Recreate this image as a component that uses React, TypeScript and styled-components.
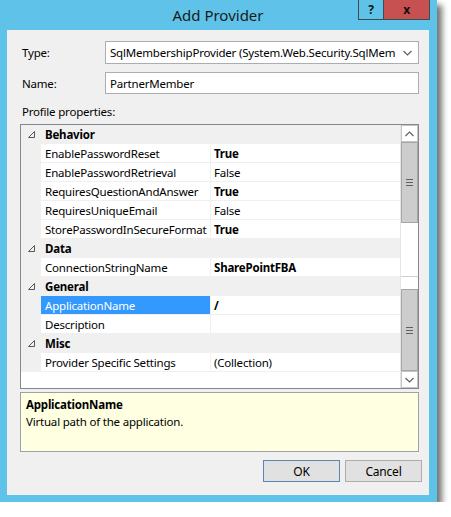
import styled, { createGlobalStyle } from 'styled-components';

const GlobalStyle = createGlobalStyle`
  html, body {
    margin: 0;
    background: #ffffff;
  }
  body {
    font-family: 'Noto Sans', 'Open Sans', sans-serif;
    font-size: 11.5px;
    letter-spacing: -0.2px;
    color: #000;
  }
`;

const Frame = styled.div`
  width: 437px;
  height: 502px;
  box-sizing: border-box;
  padding: 0 8px 7px 7px;
  background: #5fc3e9;
  box-shadow: 5px 5px 6px rgba(0, 0, 0, 0.55);
  display: flex;
  flex-direction: column;
`;

const TitleBar = styled.div`
  height: 30px;
  flex: none;
  display: grid;
  grid-template-columns: 1fr auto 1fr;
  align-items: start;
`;

const Title = styled.div`
  grid-column: 2;
  line-height: 30px;
  font-size: 15px;
  letter-spacing: 0;
  color: #1a1a1a;
`;

const CaptionButtons = styled.div`
  grid-column: 3;
  justify-self: end;
  display: flex;
  margin-right: -1px;
`;

const CaptionButton = styled.div<{ $close?: boolean }>`
  width: ${p => (p.$close ? '46px' : '26px')};
  height: 20px;
  box-sizing: border-box;
  border: 1px solid #3d4b52;
  border-top: none;
  border-left-width: ${p => (p.$close ? '0' : '1px')};
  background: ${p => (p.$close ? '#c75050' : '#5fc3e9')};
  display: flex;
  align-items: center;
  justify-content: center;
  font-weight: bold;
  font-size: 12px;
  color: #111;
`;

const Client = styled.div`
  flex: 1;
  background: #f0f0f0;
  padding: 11px 7px 0 13px;
  display: flex;
  flex-direction: column;
`;

const Form = styled.div`
  width: 399px;
  display: grid;
  grid-template-columns: 85px minmax(0, 1fr);
  row-gap: 8px;
  align-items: center;
`;

const FieldLabel = styled.div`
  padding-left: 2px;
`;

const Field = styled.div<{ $tall?: boolean }>`
  height: ${p => (p.$tall ? '23px' : '22px')};
  min-width: 0;
  box-sizing: border-box;
  border: 1px solid #abadb3;
  background: #fff;
  display: flex;
  align-items: center;
  padding: 0 6px 0 4px;
  gap: 6px;
`;

const FieldText = styled.span`
  flex: 1;
  min-width: 0;
  white-space: nowrap;
  overflow: hidden;
`;

const SectionLabel = styled.div`
  margin: 9px 0 3px 2px;
  height: 18px;
  line-height: 18px;
`;

const Grid = styled.div`
  width: 399px;
  height: 265px;
  flex: none;
  box-sizing: border-box;
  border: 1px solid #828790;
  background: #fff;
  display: flex;
`;

const Rows = styled.div`
  flex: 1;
  display: flex;
  flex-direction: column;
`;

const Row = styled.div<{ $category?: boolean }>`
  height: 19px;
  display: grid;
  grid-template-columns: 20px 169px minmax(0, 1fr);
  background: ${p => (p.$category ? '#f0f0f0' : '#fff')};
`;

const Gutter = styled.div`
  background: #f0f0f0;
  display: flex;
  align-items: center;
  justify-content: center;
`;

const CategoryName = styled.div`
  grid-column: 2 / 4;
  padding-left: 4px;
  font-weight: bold;
  line-height: 19px;
`;

const Cell = styled.div<{ $bold?: boolean; $selected?: boolean; $value?: boolean }>`
  box-sizing: border-box;
  border-bottom: 1px solid #f0f0f0;
  border-left: ${p => (p.$value ? '1px solid #f0f0f0' : 'none')};
  padding-left: ${p => (p.$value ? '3px' : '4px')};
  line-height: 19px;
  white-space: nowrap;
  overflow: hidden;
  font-weight: ${p => (p.$bold ? 'bold' : 'normal')};
  background: ${p => (p.$selected ? '#3399ff' : 'transparent')};
  color: ${p => (p.$selected ? '#fff' : '#000')};
`;

const ScrollBar = styled.div`
  width: 17px;
  display: flex;
  flex-direction: column;
  background: #fff;
  border-left: 1px solid #e6e6e6;
`;

const ArrowButton = styled.div`
  height: 17px;
  box-sizing: border-box;
  border: 1px solid #c4c4c4;
  display: flex;
  align-items: center;
  justify-content: center;
`;

const Thumb = styled.div<{ $h: number }>`
  height: ${p => p.$h}px;
  box-sizing: border-box;
  background: #cdcdcd;
  border: 1px solid #a6a6a6;
  display: flex;
  align-items: center;
  justify-content: center;
`;

const Track = styled.div<{ $h: number; $line?: boolean }>`
  height: ${p => p.$h}px;
  box-sizing: border-box;
  border-bottom: ${p => (p.$line ? '1px solid #cfcfcf' : 'none')};
`;

const Description = styled.div`
  width: 399px;
  height: 60px;
  flex: none;
  box-sizing: border-box;
  margin-top: 3px;
  border: 1px solid #a0a0a0;
  background: #ffffe1;
  padding: 3px 5px;
  line-height: 17px;
`;

const DescTitle = styled.div`
  font-weight: bold;
`;

const Buttons = styled.div`
  display: flex;
  justify-content: flex-end;
  gap: 5px;
  margin-top: 8px;
`;

const Button = styled.div<{ $default?: boolean }>`
  width: 77px;
  height: 22px;
  box-sizing: border-box;
  background: #e1e1e1;
  border: 1px solid ${p => (p.$default ? '#5b87b3' : '#adadad')};
  display: flex;
  align-items: center;
  justify-content: center;
  font-size: 12px;
`;

const Expander = () => (
  <svg width="7" height="7" viewBox="0 0 7 7">
    <path d="M6.5 0.5 L6.5 6.5 L0.5 6.5 Z" fill="none" stroke="#595959" strokeWidth="1" />
  </svg>
);

const Chevron = ({ up }: { up?: boolean }) => (
  <svg width="9" height="6" viewBox="0 0 9 6">
    <path
      d={up ? 'M0.5 5 L4.5 1 L8.5 5' : 'M0.5 1 L4.5 5 L8.5 1'}
      fill="none"
      stroke="#606060"
      strokeWidth="1.2"
    />
  </svg>
);

const Grip = () => (
  <svg width="7" height="7" viewBox="0 0 7 7">
    <rect x="0" y="0" width="7" height="1" fill="#606060" />
    <rect x="0" y="3" width="7" height="1" fill="#606060" />
    <rect x="0" y="6" width="7" height="1" fill="#606060" />
  </svg>
);

type Prop = { name: string; value: string; bold?: boolean; selected?: boolean };
type Category = { title: string; props: Prop[] };

const categories: Category[] = [
  {
    title: 'Behavior',
    props: [
      { name: 'EnablePasswordReset', value: 'True', bold: true },
      { name: 'EnablePasswordRetrieval', value: 'False' },
      { name: 'RequiresQuestionAndAnswer', value: 'True', bold: true },
      { name: 'RequiresUniqueEmail', value: 'False' },
      { name: 'StorePasswordInSecureFormat', value: 'True', bold: true },
    ],
  },
  {
    title: 'Data',
    props: [{ name: 'ConnectionStringName', value: 'SharePointFBA', bold: true }],
  },
  {
    title: 'General',
    props: [
      { name: 'ApplicationName', value: '/', bold: true, selected: true },
      { name: 'Description', value: '' },
    ],
  },
  {
    title: 'Misc',
    props: [{ name: 'Provider Specific Settings', value: '(Collection)' }],
  },
];

export default function App() {
  return (
    <>
      <GlobalStyle />
      <Frame>
        <TitleBar>
          <Title>Add Provider</Title>
          <CaptionButtons>
            <CaptionButton>?</CaptionButton>
            <CaptionButton $close>x</CaptionButton>
          </CaptionButtons>
        </TitleBar>
        <Client>
          <Form>
            <FieldLabel>Type:</FieldLabel>
            <Field $tall>
              <FieldText>SqlMembershipProvider (System.Web.Security.SqlMem</FieldText>
              <Chevron />
            </Field>
            <FieldLabel>Name:</FieldLabel>
            <Field>
              <FieldText>PartnerMember</FieldText>
            </Field>
          </Form>
          <SectionLabel>Profile properties:</SectionLabel>
          <Grid>
            <Rows>
              {categories.map(cat => (
                <div key={cat.title}>
                  <Row $category>
                    <Gutter>
                      <Expander />
                    </Gutter>
                    <CategoryName>{cat.title}</CategoryName>
                  </Row>
                  {cat.props.map(p => (
                    <Row key={p.name}>
                      <Gutter />
                      <Cell $selected={p.selected}>{p.name}</Cell>
                      <Cell $value $bold={p.bold}>{p.value}</Cell>
                    </Row>
                  ))}
                </div>
              ))}
            </Rows>
            <ScrollBar>
              <ArrowButton>
                <Chevron up />
              </ArrowButton>
              <Thumb $h={81}>
                <Grip />
              </Thumb>
              <Track $h={54} $line />
              <Track $h={12} />
              <Thumb $h={82}>
                <Grip />
              </Thumb>
              <ArrowButton>
                <Chevron />
              </ArrowButton>
            </ScrollBar>
          </Grid>
          <Description>
            <DescTitle>ApplicationName</DescTitle>
            <div>Virtual path of the application.</div>
          </Description>
          <Buttons>
            <Button $default>OK</Button>
            <Button>Cancel</Button>
          </Buttons>
        </Client>
      </Frame>
    </>
  );
}
